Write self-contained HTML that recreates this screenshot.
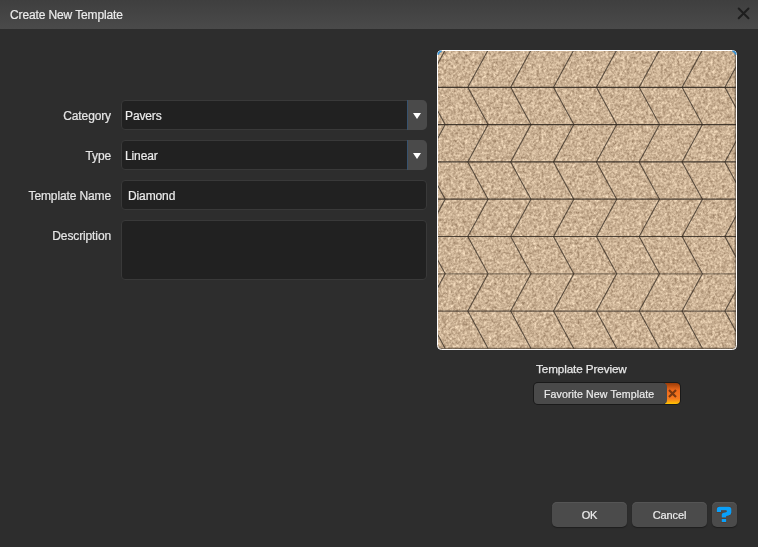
<!DOCTYPE html>
<html><head><meta charset="utf-8">
<style>
html,body{margin:0;padding:0;}
body{-webkit-font-smoothing:antialiased;width:758px;height:547px;background:#2d2d2d;position:relative;overflow:hidden;font-family:"Liberation Sans",sans-serif;color:#e4e4e4;}
.abs{position:absolute;will-change:transform;}
#title{left:0;top:0;width:758px;height:29px;background:linear-gradient(#3f3f3f,#4a4a4a);}
#title .t{left:10px;top:8px;font-size:12px;line-height:14px;color:#ececec;white-space:nowrap;letter-spacing:-0.12px;-webkit-text-stroke:0.2px #ececec;}
.lbl{font-size:12px;line-height:14px;color:#e6e6e6;text-align:right;width:111px;left:0;white-space:nowrap;letter-spacing:-0.12px;-webkit-text-stroke:0.2px #e6e6e6;}
.fld{left:121px;width:306px;background:#212121;border-radius:4px;border:1px solid #393939;box-sizing:border-box;}
.fld .v{left:3px;top:8px;font-size:12px;line-height:14px;color:#ececec;white-space:nowrap;letter-spacing:-0.12px;-webkit-text-stroke:0.2px #ececec;}
.dd{right:-1px;top:-1px;width:20px;height:calc(100% + 2px);background:#4a4a4a;border-radius:0 5px 5px 0;border-left:1px solid #37526e;box-sizing:border-box;}
.dd i{position:absolute;left:5px;top:13px;width:0;height:0;border-left:4.3px solid transparent;border-right:4.3px solid transparent;border-top:6px solid #fff;}
.btn{top:502px;height:25px;background:#4b4b4b;border-radius:5px;box-shadow:0 1px 1px #1e1e1e, inset 0 1px 0 #555;text-align:center;font-size:11px;line-height:27px;color:#ededed;letter-spacing:-0.15px;-webkit-text-stroke:0.2px #ededed;}
</style></head><body>
<div id="title" class="abs"><div class="t abs">Create New Template</div>
<svg class="abs" style="left:736px;top:6px" width="15" height="15" viewBox="0 0 15 15"><path d="M2.7 2.5 L12.5 12.3 M12.5 2.5 L2.7 12.3" stroke="#1e1e1e" stroke-width="2" stroke-linecap="round"/></svg>
</div>

<div class="abs lbl" style="top:109px">Category</div>
<div class="abs lbl" style="top:149px">Type</div>
<div class="abs lbl" style="top:189px">Template Name</div>
<div class="abs lbl" style="top:229px">Description</div>

<div class="abs fld" style="top:100px;height:30px"><div class="abs v">Pavers</div><div class="abs dd"><i></i></div></div>
<div class="abs fld" style="top:140px;height:30px"><div class="abs v">Linear</div><div class="abs dd"><i></i></div></div>
<div class="abs fld" style="top:180px;height:30px"><div class="abs v" style="left:6px">Diamond</div></div>
<div class="abs fld" style="top:220px;height:60px"></div>

<svg class="abs" style="left:437px;top:50px" width="300" height="300" viewBox="0 0 300 300">
<defs>
<filter id="noise" x="0" y="0" width="100%" height="100%" color-interpolation-filters="sRGB">
<feTurbulence type="fractalNoise" baseFrequency="0.2" numOctaves="3" seed="2" result="low"/>
<feTurbulence type="fractalNoise" baseFrequency="0.42" numOctaves="2" seed="9" result="high"/>
<feComposite in="low" in2="high" operator="arithmetic" k1="0" k2="0.35" k3="0.7" k4="0" result="mix"/>
<feGaussianBlur in="mix" stdDeviation="0.3" result="bl"/>
<feColorMatrix in="bl" type="matrix" values="0.66 0 0 0 0.47  0.68 0 0 0 0.36  0.66 0 0 0 0.255  0 0 0 0 1"/>
</filter>
<clipPath id="cp"><rect x="0.5" y="0.5" width="299" height="299" rx="4"/></clipPath>
</defs>
<g clip-path="url(#cp)">
<rect x="0" y="0" width="300" height="300" fill="#cdb08e" filter="url(#noise)"/>
<g id="lines" stroke="#342b22" fill="none"><path stroke-width="1.2" stroke-opacity="0.9" d="M0 37.3H300"/><path stroke-width="1.2" stroke-opacity="0.9" d="M0 74.6H300"/><path stroke-width="1.2" stroke-opacity="0.9" d="M0 111.9H300"/><path stroke-width="1.2" stroke-opacity="0.85" d="M0 149.2H300"/><path stroke-width="1.2" stroke-opacity="0.85" d="M0 186.5H300"/><path stroke-width="1.2" stroke-opacity="0.5" d="M0 223.8H300"/><path stroke-width="1.2" stroke-opacity="0.7" d="M0 261.1H300"/><path stroke-width="1.2" stroke-opacity="0.55" d="M0 298.3H300M298.3 0V300"/><path stroke-width="1.1" stroke-opacity="0.75" d="M8.2 0.0 L-12.1 37.3 L8.2 74.6 L-12.1 111.9 L8.2 149.2 L-12.1 186.5 L8.2 223.8 L-12.1 261.1 L8.2 298.4 M51.1 0.0 L30.8 37.3 L51.1 74.6 L30.8 111.9 L51.1 149.2 L30.8 186.5 L51.1 223.8 L30.8 261.1 L51.1 298.4 M94.0 0.0 L73.7 37.3 L94.0 74.6 L73.7 111.9 L94.0 149.2 L73.7 186.5 L94.0 223.8 L73.7 261.1 L94.0 298.4 M136.8 0.0 L116.5 37.3 L136.8 74.6 L116.5 111.9 L136.8 149.2 L116.5 186.5 L136.8 223.8 L116.5 261.1 L136.8 298.4 M179.7 0.0 L159.4 37.3 L179.7 74.6 L159.4 111.9 L179.7 149.2 L159.4 186.5 L179.7 223.8 L159.4 261.1 L179.7 298.4 M222.5 0.0 L202.2 37.3 L222.5 74.6 L202.2 111.9 L222.5 149.2 L202.2 186.5 L222.5 223.8 L202.2 261.1 L222.5 298.4 M265.4 0.0 L245.1 37.3 L265.4 74.6 L245.1 111.9 L265.4 149.2 L245.1 186.5 L265.4 223.8 L245.1 261.1 L265.4 298.4 M308.2 0.0 L287.9 37.3 L308.2 74.6 L287.9 111.9 L308.2 149.2 L287.9 186.5 L308.2 223.8 L287.9 261.1 L308.2 298.4 M351.1 0.0 L330.8 37.3 L351.1 74.6 L330.8 111.9 L351.1 149.2 L330.8 186.5 L351.1 223.8 L330.8 261.1 L351.1 298.4"/></g>
</g>
<rect x="0.5" y="0.5" width="299" height="299" rx="4" fill="none" stroke="#fff" stroke-width="1"/>
<path d="M1.2 4.6 Q1.4 1.4 4.6 1.2 M295.4 1.2 Q298.6 1.4 298.8 4.6" stroke="#2f90d8" stroke-width="1.6" fill="none"/>
</svg>

<div class="abs" style="left:536px;top:362px;font-size:11.7px;line-height:14px;color:#e8e8e8;white-space:nowrap;-webkit-text-stroke:0.25px #e8e8e8;letter-spacing:-0.1px">Template Preview</div>

<div class="abs" style="left:533px;top:382px;width:148px;height:23px;background:#1a1a1a;border-radius:5px;"></div>
<div class="abs" style="left:665px;top:383px;width:15px;height:21px;background:linear-gradient(#9a3c08,#f06a1a 35%,#f47a20 75%,#ffc400);border-radius:0 4px 4px 0;"></div>
<div class="abs" style="left:534px;top:383px;width:133px;height:21px;background:#4a4a4a;border-radius:4px;"></div>
<div class="abs" style="left:544px;top:387px;font-size:10.6px;line-height:14px;color:#ececec;white-space:nowrap;-webkit-text-stroke:0.2px #ececec;letter-spacing:0.1px">Favorite New Template</div>
<svg class="abs" style="left:667px;top:388px" width="11" height="11" viewBox="0 0 11 11"><path d="M2 2 L9 9 M9 2 L2 9" stroke="#7a3810" stroke-width="2.2"/></svg>

<div class="abs btn" style="left:552px;width:75px">OK</div>
<div class="abs btn" style="left:632px;width:75px">Cancel</div>
<div class="abs btn" style="left:712px;width:25px"></div>
<svg class="abs" style="left:713px;top:503px" width="23" height="23" viewBox="0 0 23 23">
<path d="M3.8 9.1V6.5Q3.8 3.8 6.5 3.8H15.6Q18.4 3.8 18.4 6.5V9.5Q18.4 11.8 15.6 12.5L13.2 13V14.4H8.7V11.6Q8.7 10 10.5 9.7L13 9.3Q13.8 9.1 13.8 8.2V7.9Q13.8 7.2 13 7.2H8V9.1Z M8.7 16H13.2V19.1H8.7Z" fill="#0aa0fa" stroke="#5a3c2c" stroke-width="1.1" stroke-linejoin="round" paint-order="stroke"/>
</svg>
</body></html>
